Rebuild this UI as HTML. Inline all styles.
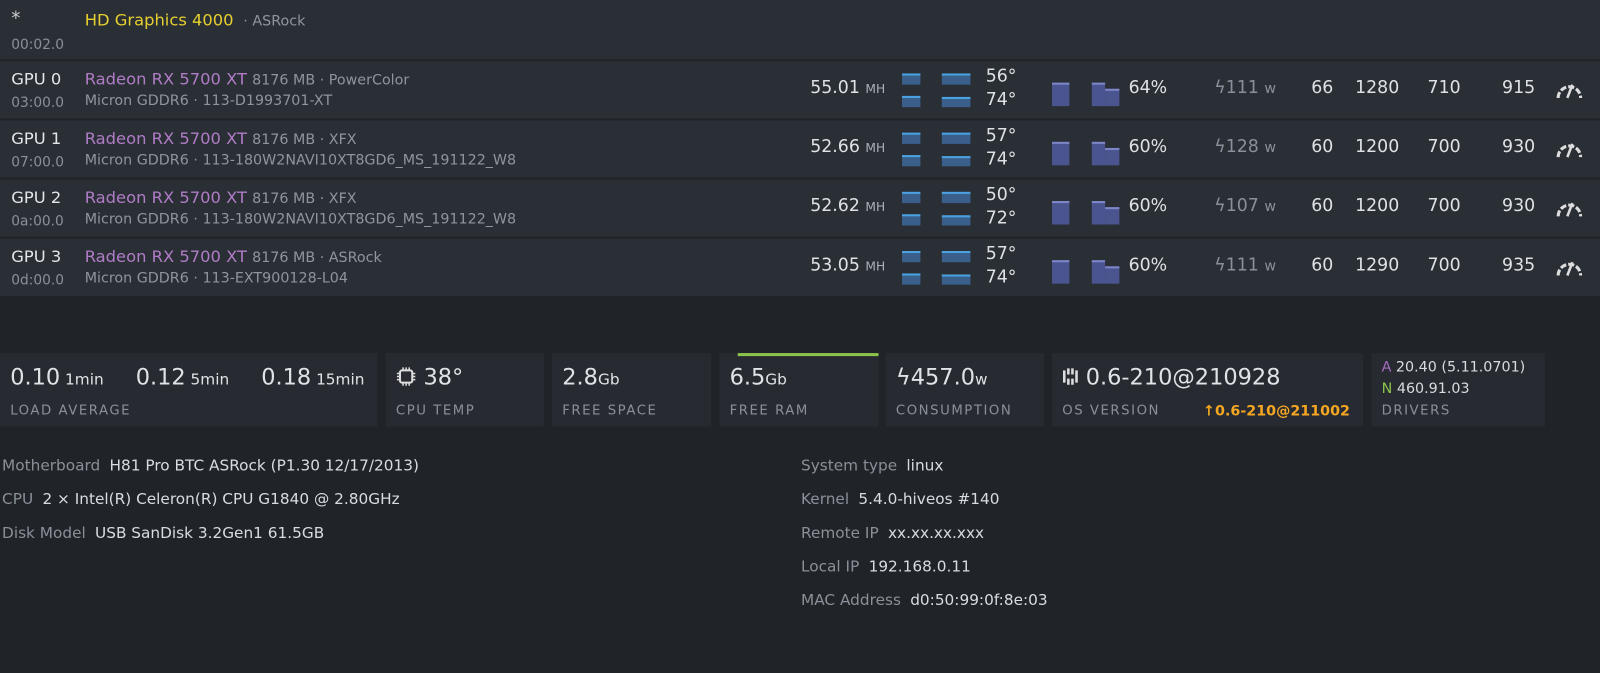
<!DOCTYPE html>
<html><head><meta charset="utf-8"><style>
body{margin:0;width:1600px;height:673px;background:#202328;font-family:"DejaVu Sans","Liberation Sans",sans-serif;color:#d8dce0;overflow:hidden;position:relative}
#w{position:absolute;left:0;top:0;width:1568px;height:660px;transform:scale(1.0204);transform-origin:0 0}
.row{position:absolute;left:0;width:1568px;background:#2a2f36}
.a{position:absolute;white-space:nowrap}
.lab{color:#e4e6e8;font-size:16px}
.bus{color:#8a9099;font-size:13.5px}
.nm{color:#b07cc6;font-size:16px}
.sm{color:#8f959c;font-size:14px}
.big{font-size:17px;color:#dfe2e5}
.u{font-size:12px;color:#aab0b6}
.bar{position:absolute;background:#3a5f8a;border-top:2px solid #4aa3e0}
.fb{position:absolute;background:#4a5590;border-top:2px solid #7c86c8}
.card{position:absolute;top:346px;height:72px;background:#272b31}
.cv{position:absolute;left:10px;top:12px;font-size:22px;color:#e0e3e6;white-space:nowrap}
.cv small{font-size:15px}
.cl{position:absolute;left:10px;top:49px;font-size:13px;letter-spacing:1.5px;color:#8a9099}
.il{color:#8a9099;font-size:15px}
.iv{color:#d8dce0;font-size:15px;margin-left:4px}
</style></head><body><div id="w">
<div class="row" style="top:0;height:58px"></div>
<div class="a" style="left:11px;top:8px;font-size:18px;color:#ccc">*</div>
<div class="a bus" style="left:11px;top:36px">00:02.0</div>
<div class="a" style="left:83px;top:10px;font-size:16px;color:#e6cf2f">HD Graphics 4000 <span class="sm">&nbsp;· ASRock</span></div>

<div id="g"></div>
<script>
var d=[["GPU 0","03:00.0","PowerColor","113-D1993701-XT","55.01","56","74","64","111","66","1280","710","915"],
["GPU 1","07:00.0","XFX","113-180W2NAVI10XT8GD6_MS_191122_W8","52.66","57","74","60","128","60","1200","700","930"],
["GPU 2","0a:00.0","XFX","113-180W2NAVI10XT8GD6_MS_191122_W8","52.62","50","72","60","107","60","1200","700","930"],
["GPU 3","0d:00.0","ASRock","113-EXT900128-L04","53.05","57","74","60","111","60","1290","700","935"]];
var h="";
d.forEach(function(r,i){var t=60+i*58;
h+='<div class="row" style="top:'+t+'px;height:56px"></div>';
h+='<div class="a lab" style="left:11px;top:'+(t+8)+'px">'+r[0]+'</div>';
h+='<div class="a bus" style="left:11px;top:'+(t+33)+'px">'+r[1]+'</div>';
h+='<div class="a nm" style="left:83px;top:'+(t+8)+'px">Radeon RX 5700 XT <span class="sm">8176 MB · '+r[2]+'</span></div>';
h+='<div class="a sm" style="left:83px;top:'+(t+31)+'px">Micron GDDR6 · '+r[3]+'</div>';
h+='<div class="a big" style="left:794px;top:'+(t+16)+'px">'+r[4]+' <span class="u">MH</span></div>';
h+='<div class="bar" style="left:884px;top:'+(t+12)+'px;width:18px;height:9px"></div>';
h+='<div class="bar" style="left:884px;top:'+(t+34)+'px;width:18px;height:9px"></div>';
h+='<div class="bar" style="left:923px;top:'+(t+12)+'px;width:28px;height:9px"></div>';
h+='<div class="bar" style="left:923px;top:'+(t+35)+'px;width:28px;height:8px"></div>';
h+='<div class="a big" style="left:966px;top:'+(t+5)+'px">'+r[5]+'°</div>';
h+='<div class="a big" style="left:966px;top:'+(t+28)+'px">'+r[6]+'°</div>';
h+='<div class="fb" style="left:1031px;top:'+(t+21)+'px;width:17px;height:21px"></div>';
h+='<div class="fb" style="left:1070px;top:'+(t+21)+'px;width:13px;height:21px"></div>';
h+='<div class="fb" style="left:1083px;top:'+(t+27)+'px;width:14px;height:15px"></div>';
h+='<div class="a big" style="left:1106px;top:'+(t+16)+'px">'+r[7]+'%</div>';
h+='<div class="a" style="left:1190px;top:'+(t+16)+'px;font-size:17px;color:#8a9099">ϟ'+r[8]+' <span style="font-size:14px">w</span></div>';
h+='<div class="a big" style="left:1285px;top:'+(t+16)+'px">'+r[9]+'</div>';
h+='<div class="a big" style="left:1328px;top:'+(t+16)+'px">'+r[10]+'</div>';
h+='<div class="a big" style="left:1399px;top:'+(t+16)+'px">'+r[11]+'</div>';
h+='<div class="a big" style="left:1472px;top:'+(t+16)+'px">'+r[12]+'</div>';
h+='<svg class="a" style="left:1524px;top:'+(t+19)+'px" width="28" height="18" viewBox="0 0 28 18"><path d="M3 17 A11 11 0 0 1 25 17" fill="none" stroke="#ddd" stroke-width="3" stroke-dasharray="6 2"/><path d="M12 17 L17 4" stroke="#ddd" stroke-width="2.5"/></svg>';
});
document.getElementById('g').innerHTML=h;
</script>

<div class="card" style="left:0;width:370px">
<div class="cv">0.10<small> 1min</small></div>
<div class="cv" style="left:133px">0.12<small> 5min</small></div>
<div class="cv" style="left:256px">0.18<small> 15min</small></div>
<div class="cl">LOAD AVERAGE</div></div>
<div class="card" style="left:378px;width:155px"><div class="cv"><svg width="20" height="20" viewBox="0 0 20 20" style="vertical-align:-2px"><rect x="4" y="4" width="12" height="12" rx="2" fill="none" stroke="#ddd" stroke-width="2"/><path d="M7 1v3M10 1v3M13 1v3M7 16v3M10 16v3M13 16v3M1 7h3M1 10h3M1 13h3M16 7h3M16 10h3M16 13h3" stroke="#ddd" stroke-width="1.5"/></svg> 38°</div><div class="cl">CPU TEMP</div></div>
<div class="card" style="left:541px;width:156px"><div class="cv">2.8<small>Gb</small></div><div class="cl">FREE SPACE</div></div>
<div class="card" style="left:705px;width:156px"><div style="position:absolute;left:18px;top:0;width:138px;height:3px;background:#8bc34a"></div><div class="cv">6.5<small>Gb</small></div><div class="cl">FREE RAM</div></div>
<div class="card" style="left:868px;width:155px"><div class="cv">ϟ457.0<small>w</small></div><div class="cl">CONSUMPTION</div></div>
<div class="card" style="left:1031px;width:305px"><div class="cv"><svg width="16" height="18" viewBox="0 0 16 18" style="vertical-align:-1px"><path d="M2 3v12M6 1v6M6 11v6M10 1v6M10 11v6M14 3v12" stroke="#ddd" stroke-width="2.5"/></svg> 0.6-210@210928</div><div class="cl">OS VERSION</div><div class="a" style="left:148px;top:49px;font-size:14px;font-weight:bold;color:#f5a623">↑0.6-210@211002</div></div>
<div class="card" style="left:1344px;width:170px">
<div class="a" style="left:10px;top:6px;font-size:14px"><span style="color:#a66cc0">A</span> 20.40 (5.11.0701)</div>
<div class="a" style="left:10px;top:27px;font-size:14px"><span style="color:#8bc34a">N</span> 460.91.03</div>
<div class="cl">DRIVERS</div></div>

<div class="a" style="left:2px;top:446px"><span class="il">Motherboard</span> <span class="iv">H81 Pro BTC ASRock (P1.30 12/17/2013)</span></div>
<div class="a" style="left:2px;top:479px"><span class="il">CPU</span> <span class="iv">2 × Intel(R) Celeron(R) CPU G1840 @ 2.80GHz</span></div>
<div class="a" style="left:2px;top:512px"><span class="il">Disk Model</span> <span class="iv">USB SanDisk 3.2Gen1 61.5GB</span></div>
<div class="a" style="left:785px;top:446px"><span class="il">System type</span> <span class="iv">linux</span></div>
<div class="a" style="left:785px;top:479px"><span class="il">Kernel</span> <span class="iv">5.4.0-hiveos #140</span></div>
<div class="a" style="left:785px;top:512px"><span class="il">Remote IP</span> <span class="iv">xx.xx.xx.xxx</span></div>
<div class="a" style="left:785px;top:545px"><span class="il">Local IP</span> <span class="iv">192.168.0.11</span></div>
<div class="a" style="left:785px;top:578px"><span class="il">MAC Address</span> <span class="iv">d0:50:99:0f:8e:03</span></div>
</div></body></html>
